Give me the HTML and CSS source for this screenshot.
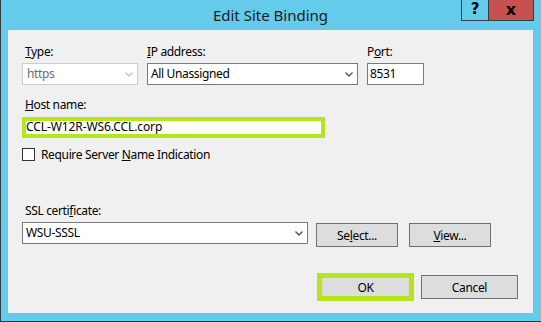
FILE: index.html
```html
<!DOCTYPE html>
<html>
<head>
    <title>Edit Site Binding</title>
    <link rel="stylesheet" href="styles.css">
</head>
<body>
    <div class="window">
        <div class="titlebar">
            <div></div>
            <div class="title">Edit Site Binding</div>
            <div class="caption">
                <span class="cap-btn cap-help">?</span>
                <span class="cap-btn cap-close">x</span>
            </div>
        </div>
        <div class="client">
            <div class="row-top">
                <div class="field f-type">
                    <div class="label"><u>T</u>ype:</div>
                    <div class="combo disabled">
                        <span>https</span>
                        <svg width="8" height="5" viewBox="0 0 8 5"><polyline points="0.5,0.5 4,4 7.5,0.5" fill="none" stroke="#c4c4c4" stroke-width="1.4"/></svg>
                    </div>
                </div>
                <div class="field f-ip">
                    <div class="label"><u>I</u>P address:</div>
                    <div class="combo">
                        <span>All Unassigned</span>
                        <svg width="8" height="5" viewBox="0 0 8 5"><polyline points="0.5,0.5 4,4 7.5,0.5" fill="none" stroke="#555" stroke-width="1.4"/></svg>
                    </div>
                </div>
                <div class="field f-port">
                    <div class="label">P<u>o</u>rt:</div>
                    <div class="textbox">8531</div>
                </div>
            </div>

            <div class="label host-label"><u>H</u>ost name:</div>
            <div class="hostbox">CCL-W12R-WS6.CCL.corp</div>

            <div class="check">
                <span class="checkbox"></span>
                <span>Require Server <u>N</u>ame Indication</span>
            </div>

            <div class="label ssl-label">SSL certi<u>f</u>icate:</div>
            <div class="ssl-row">
                <div class="combo ssl-combo">
                    <span>WSU-SSSL</span>
                    <svg width="8" height="5" viewBox="0 0 8 5"><polyline points="0.5,0.5 4,4 7.5,0.5" fill="none" stroke="#555" stroke-width="1.4"/></svg>
                </div>
                <button class="btn btn-small">Se<u>l</u>ect...</button>
                <button class="btn btn-small"><u>V</u>iew...</button>
            </div>

            <div class="actions">
                <button class="btn btn-ok">OK</button>
                <button class="btn btn-cancel">Cancel</button>
            </div>
        </div>
    </div>
</body>
</html>
```

FILE: styles.css
```css
body {
    margin: 0;
    font-family: "Noto Sans", "Open Sans", sans-serif;
    font-size: 12px;
    color: #000;
}
.window {
    width: 540px;
    height: 321px;
    background-color: #64cbea;
    border-left: 1px solid #2c3a40;
    border-bottom: 1px solid #2c3a40;
    display: flex;
    flex-direction: column;
}
.titlebar {
    height: 30px;
    display: grid;
    grid-template-columns: 1fr auto 1fr;
}
.title {
    font-size: 15px;
    color: #1b1b1b;
    line-height: 30px;
    padding-right: 1px;
}
.caption {
    display: flex;
    justify-content: flex-end;
    align-items: flex-start;
    padding-right: 7px;
}
.cap-btn {
    height: 20px;
    border: 1px solid #2f3f47;
    border-top: none;
    display: flex;
    align-items: center;
    justify-content: center;
    font-family: "DejaVu Sans", sans-serif;
    font-weight: bold;
    font-size: 15px;
    line-height: 1;
    padding-bottom: 1px;
    box-sizing: border-box;
    height: 21px;
}
.cap-help {
    width: 27px;
    border-right: none;
}
.cap-close {
    width: 46px;
    background-color: #c75050;
    font-size: 16px;
}
.client {
    margin: 0 8px 0 7px;
    height: 283px;
    background-color: #f0f0f0;
    padding: 14px 15px 0 14px;
    box-sizing: border-box;
    display: flex;
    flex-direction: column;
    align-items: flex-start;
}
.label {
    line-height: 16px;
    height: 16px;
    margin-bottom: 3px;
    padding-left: 3px;
    letter-spacing: -0.35px;
}
.row-top {
    display: flex;
    gap: 9px;
}
.f-ip .label,
.f-port .label {
    padding-left: 0;
}
.f-type { width: 116px; }
.f-ip { width: 211px; }
.f-port { width: 57px; }
.combo,
.textbox {
    height: 22px;
    box-sizing: border-box;
    border: 1px solid #7a7a7a;
    background-color: #fff;
    display: flex;
    align-items: center;
    justify-content: space-between;
    padding: 0 4px 1px 3px;
    letter-spacing: -0.35px;
}
.combo.disabled {
    border-color: #cccccc;
    color: #6d6d6d;
    padding-left: 4px;
}
.combo svg {
    margin-top: 1px;
}
.textbox {
    padding-left: 2px;
}
.host-label {
    margin-top: 12px;
    margin-bottom: 4px;
}
.hostbox {
    width: 303px;
    height: 21px;
    box-sizing: border-box;
    border: 4px solid #b5e61d;
    background-color: #fff;
    line-height: 12px;
    padding-bottom: 1px;
    letter-spacing: -0.1px;
}
.check {
    margin-top: 10px;
    display: flex;
    align-items: center;
    gap: 6px;
    line-height: 13px;
    letter-spacing: -0.35px;
}
.checkbox {
    width: 13px;
    height: 13px;
    box-sizing: border-box;
    border: 1px solid #333;
    background-color: #fff;
}
.ssl-label {
    margin-top: 42px;
}
.ssl-row {
    display: flex;
    align-items: flex-start;
}
.ssl-combo {
    width: 286px;
}
.btn {
    font-family: inherit;
    font-size: 12px;
    letter-spacing: -0.35px;
    color: #000;
    background-color: #dddddd;
    border: 1px solid #707070;
    border-radius: 0;
    padding: 0;
    box-sizing: border-box;
}
.btn-small {
    width: 82px;
    height: 24px;
    margin: 1px 0 0 8px;
}
.btn-small + .btn-small {
    margin-left: 11px;
}
.actions {
    margin-top: 26px;
    align-self: flex-end;
    display: flex;
    align-items: center;
    gap: 7px;
}
.btn-ok {
    width: 97px;
    height: 28px;
    border: 5px solid #b5e61d;
}
.btn-cancel {
    width: 97px;
    height: 24px;
}
```
